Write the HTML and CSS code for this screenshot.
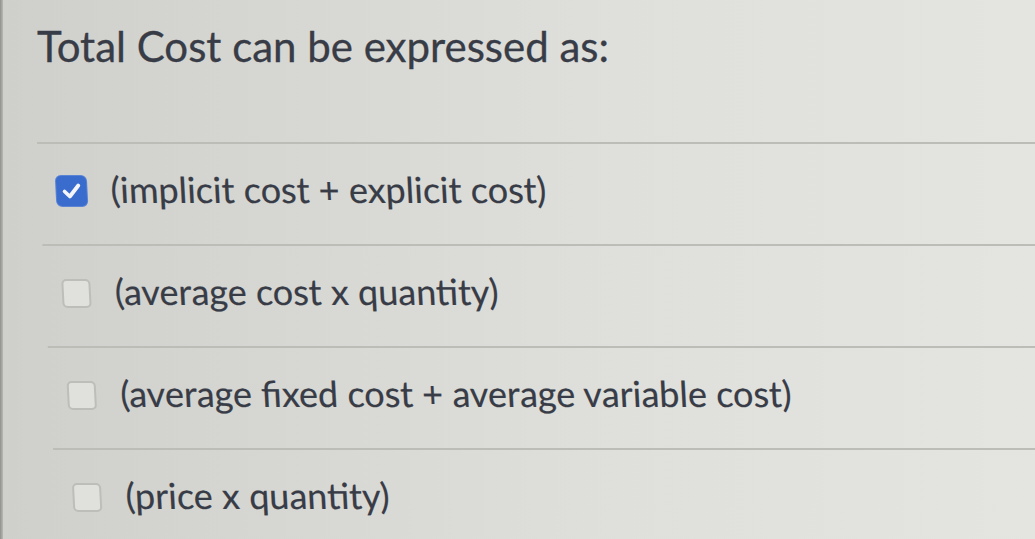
FILE: index.html
```html
<!DOCTYPE html>
<html lang="en">
<head>
<meta charset="utf-8">
<title>Total Cost question</title>
<link rel="stylesheet" href="styles.css">
</head>
<body>
<div class="screen">
  <div class="edge"></div>
  <main class="question">
    <h1 class="prompt">Total Cost can be expressed as:</h1>
    <ul class="answers">
      <li class="answer">
        <span class="box checked">
          <svg viewBox="0 0 30 30" width="30" height="30" aria-hidden="true"><path d="M8 15.5 L13 20.5 L22 9.5" fill="none" stroke="#f4f6fb" stroke-width="3.8" stroke-linecap="round" stroke-linejoin="round"/></svg>
        </span>
        <span class="label">(implicit cost + explicit cost)</span>
      </li>
      <li class="answer">
        <span class="box"></span>
        <span class="label">(average cost x quantity)</span>
      </li>
      <li class="answer">
        <span class="box"></span>
        <span class="label">(average fixed cost + average variable cost)</span>
      </li>
      <li class="answer">
        <span class="box"></span>
        <span class="label">(price x quantity)</span>
      </li>
    </ul>
  </main>
</div>
</body>
</html>
```
FILE: styles.css
```css
html, body {
  margin: 0;
  padding: 0;
  height: 100%;
  overflow: hidden;
}

body {
  background: linear-gradient(90deg, #cfcfcb 0%, #d7d7d3 30%, #dfdfdb 60%, #e4e4e0 100%);
  font-family: Lato, "Open Sans", sans-serif;
  color: #383c47;
}

.screen {
  display: flex;
  height: 100%;
}

.edge {
  width: 3px;
  flex: none;
  background: linear-gradient(90deg, #8f8f8c, #b8b8b4);
}

.question {
  flex: 1;
  padding: 21px 0 0 34px;
}

.prompt {
  margin: 0;
  font-size: 42px;
  font-weight: 400;
  line-height: 1.2;
  letter-spacing: 0;
  -webkit-text-stroke: 0.3px #383c47;
}

.answers {
  list-style: none;
  margin: 71px 0 0 0;
  padding: 0;
  transform: skewX(3deg);
  transform-origin: 0 0;
}

.answer {
  display: flex;
  align-items: center;
  gap: 24px;
  padding: 24px 0 34px 17px;
  border-top: 2px solid #bdbdb8;
}

.box {
  width: 29px;
  height: 29px;
  box-sizing: border-box;
  border: 2px solid #bdbdb9;
  border-radius: 5px;
  background: #e0e0dc;
  flex: none;
  margin-top: 4px;
  display: flex;
}

.box.checked {
  width: 30px;
  height: 30px;
  border: none;
  background: #3a6cce;
  box-shadow: 0 0 0 1px #5b84d4;
}

.label {
  font-size: 36px;
  line-height: 42px;
  white-space: nowrap;
  -webkit-text-stroke: 0.2px #383c47;
}
```
